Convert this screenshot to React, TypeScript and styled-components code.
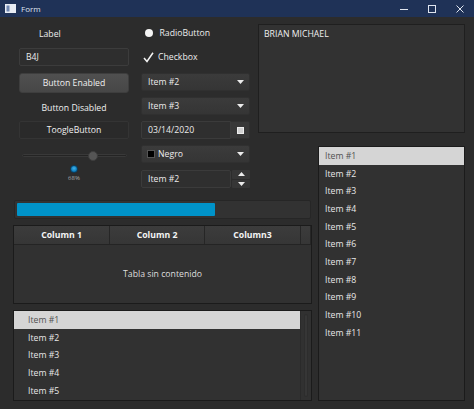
import React from "react";
import styled, { createGlobalStyle } from "styled-components";

const FONT = `"Open Sans", "Noto Sans", "DejaVu Sans", sans-serif`;

const Global = createGlobalStyle`
  html, body { margin: 0; padding: 0; background: #2c2c2c; }
  body { font-family: ${FONT}; font-size: 8.7px; color: #ececec; }
  * { box-sizing: border-box; }
`;

const Window = styled.div`
  width: 474px;
  height: 409px;
  display: flex;
  flex-direction: column;
  background: #2c2c2c;
  overflow: hidden;
`;

const TitleBar = styled.div`
  flex: 0 0 17px;
  height: 17px;
  background: #1f3257;
  display: flex;
  align-items: center;
  padding-left: 5px;
  color: #dfe5ef;
  font-size: 8px;
`;

const TitleText = styled.span`
  margin-left: 5px;
`;

const WinButtons = styled.div`
  margin-left: auto;
  display: flex;
  height: 100%;
`;

const WinButton = styled.div`
  width: 28px;
  display: flex;
  align-items: center;
  justify-content: center;
`;

const Content = styled.div`
  flex: 1;
  display: grid;
  grid-template-columns: 122px 111px 54px 147px;
  grid-template-rows: 116px 48px 19px 79px 91px;
  column-gap: 6px;
  row-gap: 6px;
  padding: 7px 0 0 13px;
`;

/* ---------- left column ---------- */
const LeftCol = styled.div`
  grid-column: 1;
  grid-row: 1 / 3;
  display: flex;
  flex-direction: column;
  padding-left: 6px;
  width: 116px;
`;

const LabelText = styled.div`
  height: 20px;
  display: flex;
  align-items: center;
  padding-left: 20px;
  color: #ececec;
`;

const TextField = styled.div<{ $mt: number }>`
  margin-top: ${(p) => p.$mt}px;
  height: 18px;
  display: flex;
  align-items: center;
  padding-left: 6px;
  background: #2e2e2e;
  border: 1px solid #3c3c3c;
  border-radius: 2px;
  color: #ececec;
  width: 110px;
`;

const Button = styled.div<{ $variant: "enabled" | "disabled" | "toggle"; $mt: number; $h: number }>`
  margin-top: ${(p) => p.$mt}px;
  height: ${(p) => p.$h}px;
  width: 110px;
  display: flex;
  align-items: center;
  justify-content: center;
  border-radius: ${(p) => (p.$variant === "enabled" ? 3 : 2)}px;
  color: #f0f0f0;
  background: ${(p) =>
    p.$variant === "enabled"
      ? "linear-gradient(#505050, #474747)"
      : p.$variant === "toggle"
      ? "#2a2a2a"
      : "transparent"};
  border: 1px solid
    ${(p) =>
      p.$variant === "enabled" ? "#3e3e3e" : p.$variant === "toggle" ? "#343434" : "transparent"};
`;

const SliderBox = styled.div`
  margin-top: 7px;
  height: 18px;
  width: 110px;
  position: relative;
`;

const SliderTrack = styled.div`
  position: absolute;
  left: 3px;
  right: 2px;
  top: 8px;
  height: 3px;
  border-radius: 2px;
  background: #242424;
  border: 1px solid #393939;
`;

const SliderThumb = styled.div`
  position: absolute;
  left: 69px;
  top: 4.5px;
  width: 10px;
  height: 10px;
  border-radius: 50%;
  background: #555555;
  border: 1px solid #3d3d3d;
`;

const Indicator = styled.div`
  margin-top: 1px;
  width: 110px;
  display: flex;
  flex-direction: column;
  align-items: center;
`;

const IndicatorDot = styled.div`
  width: 8px;
  height: 8px;
  border-radius: 50%;
  background: radial-gradient(circle at 50% 40%, #3fb1ea, #0b79b8 70%);
  border: 1px solid #0a3f60;
`;

const IndicatorText = styled.div`
  margin-top: 1px;
  font-size: 6px;
  color: #a8a8a8;
`;

/* ---------- middle column ---------- */
const MidCol = styled.div`
  grid-column: 2;
  grid-row: 1 / 3;
  display: flex;
  flex-direction: column;
  width: 109px;
`;

const OptionRow = styled.div<{ $mt: number; $gap: number }>`
  margin-top: ${(p) => p.$mt}px;
  height: 18px;
  display: flex;
  align-items: center;
  gap: ${(p) => p.$gap}px;
  padding-left: 2px;
  color: #ececec;
`;

const RadioDot = styled.div`
  width: 8px;
  height: 8px;
  border-radius: 50%;
  background: #f4f4f4;
  margin-left: 1.5px;
  margin-right: 1px;
`;

const Combo = styled.div<{ $mt: number }>`
  margin-top: ${(p) => p.$mt}px;
  height: 18px;
  display: flex;
  align-items: center;
  padding: 0 5px 0 6px;
  background: linear-gradient(#3b3b3b, #353535);
  border: 1px solid #303030;
  border-radius: 2px;
  color: #ececec;
`;

const ComboText = styled.span`
  flex: 1;
  display: flex;
  align-items: center;
  gap: 3px;
`;

const Swatch = styled.span`
  width: 8px;
  height: 8px;
  background: #000;
  border: 1px solid #555;
  margin-left: -1px;
`;

const Field = styled.div<{ $mt: number }>`
  margin-top: ${(p) => p.$mt}px;
  height: 18px;
  display: flex;
  align-items: stretch;
  color: #ececec;
`;

const FieldInput = styled.div`
  flex: 1;
  display: flex;
  align-items: center;
  padding-left: 6px;
  background: #2f2f2f;
  border: 1px solid #3b3b3b;
  border-radius: 2px 0 0 2px;
`;

const FieldButton = styled.div`
  width: 19px;
  display: flex;
  align-items: center;
  justify-content: center;
  background: #383838;
  border: 1px solid #303030;
  border-left: none;
  border-radius: 0 2px 2px 0;
`;

const CalIcon = styled.div`
  width: 7px;
  height: 7px;
  background: #d2d2d2;
  border: 1px solid #eeeeee;
`;

const SpinInput = styled(FieldInput)`
  border-radius: 2px;
  margin-right: 1px;
`;

const SpinButtons = styled.div`
  width: 18px;
  display: flex;
  flex-direction: column;
  gap: 1px;
`;

const SpinButton = styled.div`
  flex: 1;
  display: flex;
  align-items: center;
  justify-content: center;
  background: #363636;
  border-radius: 1px;
`;

/* ---------- right area ---------- */
const TextArea = styled.div`
  grid-column: 3 / 5;
  grid-row: 1;
  height: 109px;
  background: #323232;
  border: 1px solid #1f1f1f;
  padding: 3px 5px;
  color: #f0f0f0;
`;

const List = styled.div<{ $col: string; $row: string }>`
  grid-column: ${(p) => p.$col};
  grid-row: ${(p) => p.$row};
  display: flex;
  background: #313131;
  border: 1px solid #1b1b1b;
  overflow: hidden;
`;

const ListItems = styled.div`
  flex: 1;
  display: flex;
  flex-direction: column;
`;

const ListItem = styled.div<{ $selected?: boolean; $pad: number }>`
  flex: 0 0 17.7px;
  height: 17.7px;
  display: flex;
  align-items: center;
  padding-left: ${(p) => p.$pad}px;
  color: ${(p) => (p.$selected ? "#505050" : "#e8e8e8")};
  background: ${(p) => (p.$selected ? "#d5d5d5" : "transparent")};
`;

const ScrollTrack = styled.div`
  width: 11px;
  padding: 3px 3px;
  display: flex;
  border-left: 1px solid #2a2a2a;
`;

const ScrollThumb = styled.div`
  flex: 1;
  border-radius: 3px;
  background: #363636;
  border: 1px solid #2d2d2d;
`;

/* ---------- progress + table ---------- */
const Progress = styled.div`
  grid-column: 1 / 4;
  grid-row: 3;
  margin: 0 1px;
  padding: 2px;
  background: #323232;
  border: 1px solid #262626;
  border-radius: 2px;
  display: flex;
`;

const ProgressFill = styled.div`
  background: #0093c9;
  border-radius: 1px;
`;

const Table = styled.div`
  grid-column: 1 / 4;
  grid-row: 4;
  display: flex;
  flex-direction: column;
  background: #313131;
  border: 1px solid #1b1b1b;
`;

const THead = styled.div`
  flex: 0 0 19px;
  display: grid;
  grid-template-columns: 96px 95px 96px 1fr;
  background: linear-gradient(#3c3c3c, #363636);
  border-bottom: 1px solid #242424;
`;

const TH = styled.div`
  display: flex;
  align-items: center;
  justify-content: center;
  font-weight: 700;
  color: #f4f4f4;
  border-right: 1px solid #262626;
`;

const EmptyMsg = styled.div`
  flex: 1;
  display: flex;
  align-items: center;
  justify-content: center;
  color: #dedede;
`;

const Down = () => (
  <svg width="7" height="4" viewBox="0 0 7 4">
    <path d="M0 0 L7 0 L3.5 4 Z" fill="#ececec" />
  </svg>
);
const Up = () => (
  <svg width="7" height="4" viewBox="0 0 7 4">
    <path d="M0 4 L7 4 L3.5 0 Z" fill="#ececec" />
  </svg>
);

export default function App() {
  const rightItems = Array.from({ length: 11 }, (_, i) => `Item #${i + 1}`);
  const bottomItems = Array.from({ length: 5 }, (_, i) => `Item #${i + 1}`);
  const progress = 68;
  return (
    <>
      <Global />
      <Window>
        <TitleBar>
          <svg width="11" height="9" viewBox="0 0 11 9">
            <rect x="0.5" y="0.5" width="10" height="8" fill="#e8edf5" stroke="#e8edf5" />
            <rect x="1.5" y="1.5" width="3" height="6" fill="#6f86b0" />
          </svg>
          <TitleText>Form</TitleText>
          <WinButtons>
            <WinButton>
              <svg width="10" height="10" viewBox="0 0 10 10">
                <path d="M1 5.5 H9" stroke="#dfe5ef" strokeWidth="1" />
              </svg>
            </WinButton>
            <WinButton>
              <svg width="10" height="10" viewBox="0 0 10 10">
                <rect x="1.5" y="1.5" width="7" height="7" fill="none" stroke="#dfe5ef" strokeWidth="1" />
              </svg>
            </WinButton>
            <WinButton>
              <svg width="10" height="10" viewBox="0 0 10 10">
                <path d="M1.5 1.5 L8.5 8.5 M8.5 1.5 L1.5 8.5" stroke="#dfe5ef" strokeWidth="1" />
              </svg>
            </WinButton>
          </WinButtons>
        </TitleBar>
        <Content>
          <LeftCol>
            <LabelText>Label</LabelText>
            <TextField $mt={4}>B4J</TextField>
            <Button $variant="enabled" $mt={7} $h={20}>
              Button Enabled
            </Button>
            <Button $variant="disabled" $mt={4} $h={21}>
              Button Disabled
            </Button>
            <Button $variant="toggle" $mt={3} $h={18}>
              ToogleButton
            </Button>
            <SliderBox>
              <SliderTrack />
              <SliderThumb />
            </SliderBox>
            <Indicator>
              <IndicatorDot />
              <IndicatorText>68%</IndicatorText>
            </Indicator>
          </LeftCol>

          <MidCol>
            <OptionRow $mt={0} $gap={6}>
              <RadioDot />
              RadioButton
            </OptionRow>
            <OptionRow $mt={6} $gap={4}>
              <svg width="11" height="11" viewBox="0 0 11 11">
                <path d="M1 6 L4 9.5 L10 0.8" fill="none" stroke="#f4f4f4" strokeWidth="1.5" />
              </svg>
              Checkbox
            </OptionRow>
            <Combo $mt={7}>
              <ComboText>Item #2</ComboText>
              <Down />
            </Combo>
            <Combo $mt={6}>
              <ComboText>Item #3</ComboText>
              <Down />
            </Combo>
            <Field $mt={6}>
              <FieldInput>03/14/2020</FieldInput>
              <FieldButton>
                <CalIcon />
              </FieldButton>
            </Field>
            <Combo $mt={6}>
              <ComboText>
                <Swatch />
                Negro
              </ComboText>
              <Down />
            </Combo>
            <Field $mt={7}>
              <SpinInput>Item #2</SpinInput>
              <SpinButtons>
                <SpinButton>
                  <Up />
                </SpinButton>
                <SpinButton>
                  <Down />
                </SpinButton>
              </SpinButtons>
            </Field>
          </MidCol>

          <TextArea>BRIAN MICHAEL</TextArea>

          <List $col="4" $row="2 / 6">
            <ListItems>
              {rightItems.map((t, i) => (
                <ListItem key={t} $selected={i === 0} $pad={6}>
                  {t}
                </ListItem>
              ))}
            </ListItems>
          </List>

          <Progress>
            <ProgressFill style={{ width: `${progress}%` }} />
          </Progress>

          <Table>
            <THead>
              <TH>Column 1</TH>
              <TH>Column 2</TH>
              <TH>Column3</TH>
              <TH />
            </THead>
            <EmptyMsg>Tabla sin contenido</EmptyMsg>
          </Table>

          <List $col="1 / 4" $row="5">
            <ListItems>
              {bottomItems.map((t, i) => (
                <ListItem key={t} $selected={i === 0} $pad={14}>
                  {t}
                </ListItem>
              ))}
            </ListItems>
            <ScrollTrack>
              <ScrollThumb />
            </ScrollTrack>
          </List>
        </Content>
      </Window>
    </>
  );
}
